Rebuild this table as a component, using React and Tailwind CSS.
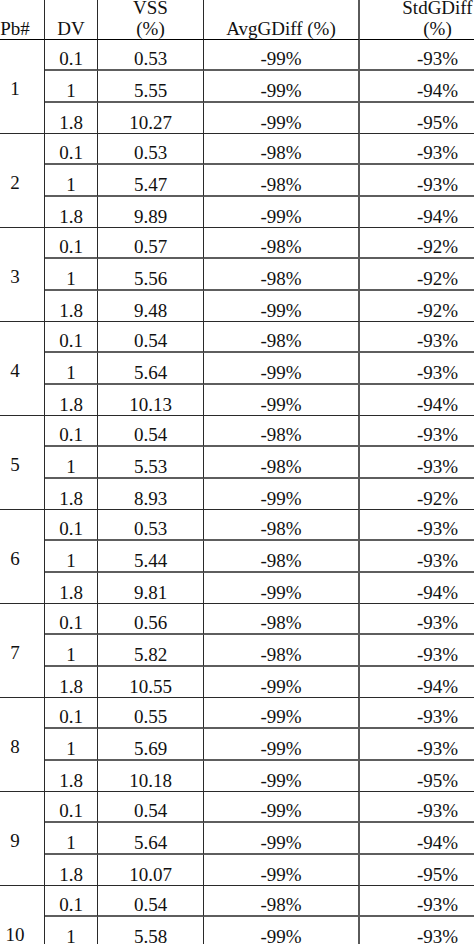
import React from 'react'

// one entry per Pb#: [dv, vss, avg, std]
const groups = [
    [['0.1', '0.53', '-99%', '-93%'], ['1', '5.55', '-99%', '-94%'], ['1.8', '10.27', '-99%', '-95%']],
    [['0.1', '0.53', '-98%', '-93%'], ['1', '5.47', '-98%', '-93%'], ['1.8', '9.89', '-99%', '-94%']],
    [['0.1', '0.57', '-98%', '-92%'], ['1', '5.56', '-98%', '-92%'], ['1.8', '9.48', '-99%', '-92%']],
    [['0.1', '0.54', '-98%', '-93%'], ['1', '5.64', '-99%', '-93%'], ['1.8', '10.13', '-99%', '-94%']],
    [['0.1', '0.54', '-98%', '-93%'], ['1', '5.53', '-98%', '-93%'], ['1.8', '8.93', '-99%', '-92%']],
    [['0.1', '0.53', '-98%', '-93%'], ['1', '5.44', '-98%', '-93%'], ['1.8', '9.81', '-99%', '-94%']],
    [['0.1', '0.56', '-98%', '-93%'], ['1', '5.82', '-98%', '-93%'], ['1.8', '10.55', '-99%', '-94%']],
    [['0.1', '0.55', '-99%', '-93%'], ['1', '5.69', '-99%', '-93%'], ['1.8', '10.18', '-99%', '-95%']],
    [['0.1', '0.54', '-99%', '-93%'], ['1', '5.64', '-99%', '-94%'], ['1.8', '10.07', '-99%', '-95%']],
    [['0.1', '0.54', '-98%', '-93%'], ['1', '5.58', '-99%', '-93%'], ['', '', '', '']],
]

function HeadCell({ children, last }) {
    return (
        <div className={`flex flex-col items-center justify-end overflow-hidden border-b border-black ${last ? 'border-r-2 border-r-[#5a5a5a]' : 'border-r border-r-[#2a2a2a]'}`}>
            {children}
        </div>
    )
}

function App() {
    return (
        <div className="w-[474px] h-[944px] overflow-hidden bg-white [font-family:'Liberation_Serif','Times_New_Roman',serif] text-[19px] leading-[21px] text-[#111]">
            <div className="-ml-[14px] grid grid-cols-[59px_53px_106px_156px_156px] grid-rows-[40px_repeat(30,31.33px)]">
                {/* header */}
                <HeadCell><span>Pb#</span></HeadCell>
                <HeadCell><span>DV</span></HeadCell>
                <HeadCell><span>VSS</span><span>(%)</span></HeadCell>
                <HeadCell last><span>AvgGDiff (%)</span></HeadCell>
                <HeadCell><span>StdGDiff</span><span>(%)</span></HeadCell>

                {groups.map((rows, g) => (
                    <React.Fragment key={g}>
                        <div className="col-start-1 row-span-3 flex items-center justify-center pt-1 border-r border-b border-[#2a2a2a]">
                            {g + 1}
                        </div>
                        {rows.map((row, r) => {
                            const bottom = r === 2 ? 'border-b border-b-[#2a2a2a]' : 'border-b-2 border-b-[#5e5e5e]'
                            return row.map((val, c) => (
                                <div
                                    key={`${r}-${c}`}
                                    className={`flex items-end justify-center ${bottom} ${c === 2 ? 'border-r-2 border-r-[#5a5a5a]' : 'border-r border-r-[#2a2a2a]'} ${c === 0 ? 'col-start-2' : ''}`}
                                >
                                    {val}
                                </div>
                            ))
                        })}
                    </React.Fragment>
                ))}
            </div>
        </div>
    )
}

export default App
